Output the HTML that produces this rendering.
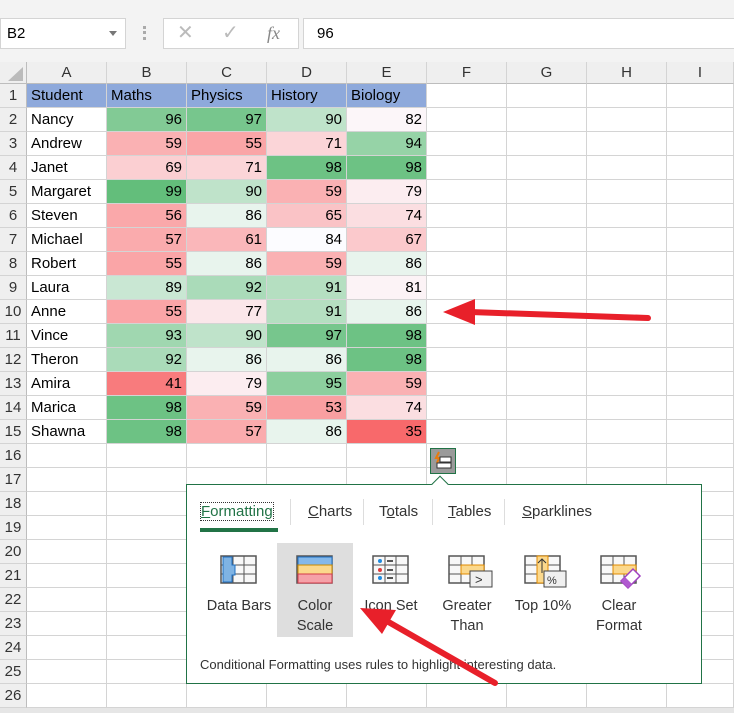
<!DOCTYPE html>
<html><head><meta charset="utf-8"><style>
*{box-sizing:border-box;margin:0;padding:0}
body{width:734px;height:713px;overflow:hidden;background:#fff;font-family:"Liberation Sans",sans-serif;position:relative}
.abs{position:absolute}
#top{left:0;top:0;width:734px;height:62px;background:#f3f3f3}
.box{position:absolute;background:#fff;border:1px solid #d4d4d4}
.colh{position:absolute;top:62px;height:22px;background:#efefef;border-right:1px solid #d4d4d4;border-bottom:1px solid #bdbdbd;font-size:15px;color:#333;text-align:center;line-height:22px}
.rowh{position:absolute;left:0;width:27px;height:24px;background:#efefef;border-bottom:1px solid #d4d4d4;border-right:1px solid #bdbdbd;font-size:15px;color:#333;text-align:center;line-height:24px}
.c{position:absolute;height:24px;border-right:1px solid #d4d4d4;border-bottom:1px solid #d4d4d4;font-size:15px;line-height:24px;padding:0 4px;color:#000;white-space:nowrap}
.n{text-align:right}
#panel{left:186px;top:484px;width:516px;height:200px;border:1px solid #217346;background:#fff}
.tab{position:absolute;top:18px;font-size:15px;color:#333}
.lbl{position:absolute;top:111px;font-size:14.5px;color:#333;text-align:center;line-height:20px}
</style></head><body>
<div id="top" class="abs"></div>
<div class="box" style="left:0;top:18px;width:126px;height:31px;font-size:15px;line-height:29px;padding-left:6px">B2<span style="position:absolute;right:8px;top:12px;border:4px solid transparent;border-top:5px solid #777"></span></div>
<div class="abs" style="left:143px;top:26px;width:3px;height:14px;border-left:3px dotted #aaa"></div>
<div class="box" style="left:163px;top:18px;width:136px;height:31px;color:#bbb;font-size:20px;line-height:29px">
<span class="abs" style="left:13px">✕</span><span class="abs" style="left:58px">✓</span><span class="abs" style="left:103px;font-family:'Liberation Serif',serif;font-style:italic;color:#888;font-size:18px">fx</span></div>
<div class="box" style="left:303px;top:18px;width:440px;height:31px;font-size:15px;line-height:29px;padding-left:13px">96</div>
<div class="abs" style="left:0;top:62px;width:27px;height:22px;background:#efefef;border-right:1px solid #bdbdbd;border-bottom:1px solid #bdbdbd"><div class="abs" style="left:8px;top:5px;border-left:15px solid transparent;border-bottom:14px solid #bbb"></div></div>
<div id="grid"></div>
<div class="abs" style="left:0;top:708px;width:734px;height:5px;background:#e6e6e6"></div>
<div class="abs" style="left:430px;top:448px;width:26px;height:26px;background:#9a9a9a;border:1px solid #217346"><svg width="24" height="24" viewBox="0 0 24 24"><path d="M8 3l-3 6h3l-2 5" stroke="#e87b0c" stroke-width="2" fill="none"/><rect x="9" y="8" width="11" height="5" fill="#fff" stroke="#333"/><rect x="6" y="14" width="14" height="5" fill="#fff" stroke="#333"/></svg></div>
<div id="panel" class="abs">
<div class="abs" style="left:247px;top:-7px;width:12px;height:12px;background:#fff;border-left:1px solid #217346;border-top:1px solid #217346;transform:rotate(45deg)"></div>
<span class="tab" style="left:14px;color:#217346;outline:1px dotted #333"><u>F</u>ormatting</span>
<div class="abs" style="left:13px;top:43px;width:78px;height:4px;background:#217346"></div>
<div class="abs" style="left:103px;top:14px;width:1px;height:26px;background:#ddd"></div>
<span class="tab" style="left:121px"><u>C</u>harts</span>
<div class="abs" style="left:176px;top:14px;width:1px;height:26px;background:#ddd"></div>
<span class="tab" style="left:192px">T<u>o</u>tals</span>
<div class="abs" style="left:245px;top:14px;width:1px;height:26px;background:#ddd"></div>
<span class="tab" style="left:261px"><u>T</u>ables</span>
<div class="abs" style="left:317px;top:14px;width:1px;height:26px;background:#ddd"></div>
<span class="tab" style="left:335px"><u>S</u>parklines</span>
<div class="abs" style="left:90px;top:58px;width:76px;height:94px;background:#dedede"></div>
<svg class="abs" style="left:0;top:0" width="516" height="110">
<g fill="#f8f8f8" stroke="#555" stroke-width="1.5">
<rect x="34" y="71" width="35" height="27"/><rect x="110" y="71" width="35" height="27"/><rect x="186" y="71" width="35" height="27"/><rect x="262" y="71" width="35" height="27"/><rect x="338" y="71" width="35" height="27"/><rect x="414" y="71" width="35" height="27"/></g>
<g stroke="#555" stroke-width="1"><path d="M34 80h35M34 89h35M46 71v27M57 71v27M110 80h35M110 89h35M122 71v27M133 71v27M186 80h35M186 89h35M198 71v27M209 71v27M262 80h35M262 89h35M274 71v27M285 71v27M338 80h35M338 89h35M350 71v27M361 71v27M414 80h35M414 89h35M426 71v27M437 71v27"/></g>
<path d="M36 72h9v8h3v10h-3v7h-9z" fill="#7fb3e3" stroke="#1e6fc2"/>
<rect x="111" y="72" width="34" height="8" fill="#84b8ea" stroke="#1e6fc2"/><rect x="111" y="80" width="34" height="9" fill="#fbd88c" stroke="#c98a00"/><rect x="111" y="89" width="34" height="9" fill="#f5a1a8" stroke="#d43a4a"/>
<circle cx="193" cy="76" r="2" fill="#1e8be0"/><circle cx="193" cy="85" r="2" fill="#e03a3a"/><circle cx="193" cy="93" r="2" fill="#1e8be0"/>
<path d="M200 76h6M200 85h6M200 93h6" stroke="#555" stroke-width="2"/>
<rect x="274" y="80" width="23" height="9" fill="#fbd88c" stroke="#e08a00"/><rect x="283" y="86" width="22" height="16" fill="#f0f0f0" stroke="#444"/><text x="288" y="99" font-size="13" fill="#333" font-family="Liberation Sans">&gt;</text>
<rect x="350" y="71" width="11" height="27" fill="#fbd88c" stroke="#e08a00"/><path d="M355 88V74M351 78l4-4 4 4" stroke="#333" fill="none"/><rect x="357" y="86" width="22" height="16" fill="#f0f0f0" stroke="#444"/><text x="360" y="99" font-size="11" fill="#333" font-family="Liberation Sans">%</text>
<rect x="426" y="80" width="23" height="9" fill="#fbd88c" stroke="#e08a00"/><path d="M434 96l12-12 7 7-12 12z" fill="#fff" stroke="#a040c0" stroke-width="1.5"/><path d="M434 96l4-4 7 7-4 4z" fill="#b05ad0"/>
</svg>
<div class="lbl" style="left:14px;width:76px;top:111px">Data Bars</div>
<div class="lbl" style="left:90px;width:76px">Color<br>Scale</div>
<div class="lbl" style="left:166px;width:76px">Icon Set</div>
<div class="lbl" style="left:242px;width:76px">Greater<br>Than</div>
<div class="lbl" style="left:318px;width:76px">Top 10%</div>
<div class="lbl" style="left:394px;width:76px">Clear<br>Format</div>
<div class="abs" style="left:13px;top:172px;font-size:13px;color:#333">Conditional Formatting uses rules to highlight interesting data.</div>
</div>
<svg class="abs" style="left:0;top:0" width="734" height="713">
<path d="M648 318L470 312" stroke="#e8202a" stroke-width="6" stroke-linecap="round"/><path d="M443 312l32-13v26z" fill="#e8202a"/>
<path d="M495 683L385 620" stroke="#e8202a" stroke-width="6" stroke-linecap="round"/><path d="M360 608l36 2-14 24z" fill="#e8202a"/>
</svg>
<script>
var cols=[[27,80,"A"],[107,80,"B"],[187,80,"C"],[267,80,"D"],[347,80,"E"],[427,80,"F"],[507,80,"G"],[587,80,"H"],[667,67,"I"]];
var data=[["Student","Maths","Physics","History","Biology"],["Nancy",96,97,90,82],["Andrew",59,55,71,94],["Janet",69,71,98,98],["Margaret",99,90,59,79],["Steven",56,86,65,74],["Michael",57,61,84,67],["Robert",55,86,59,86],["Laura",89,92,91,81],["Anne",55,77,91,86],["Vince",93,90,97,98],["Theron",92,86,86,98],["Amira",41,79,95,59],["Marica",98,59,53,74],["Shawna",98,57,86,35]];
function mix(a,b,t){return "rgb("+a.map(function(x,i){return Math.round(x+(b[i]-x)*t)}).join(",")+")"}
function col(v){var w=[252,252,255];if(v>=84)return mix(w,[99,190,123],(v-84)/15);return mix(w,[248,105,107],(84-v)/49)}
var h="";
cols.forEach(function(c){h+='<div class="colh" style="left:'+c[0]+'px;width:'+c[1]+'px">'+c[2]+'</div>'});
for(var r=0;r<26;r++){var y=84+24*r;h+='<div class="rowh" style="top:'+y+'px">'+(r+1)+'</div>';
cols.forEach(function(c,ci){var t="",bg="#fff",cls="c";
if(r<15&&ci<5){var v=data[r][ci];t=v;if(r==0)bg="#8ea9db";else if(ci>0){bg=col(v);cls+=" n"}}
h+='<div class="'+cls+'" style="left:'+c[0]+'px;top:'+y+'px;width:'+c[1]+'px;background:'+bg+'">'+t+'</div>'})}
document.getElementById("grid").innerHTML=h;
</script>
</body></html>
